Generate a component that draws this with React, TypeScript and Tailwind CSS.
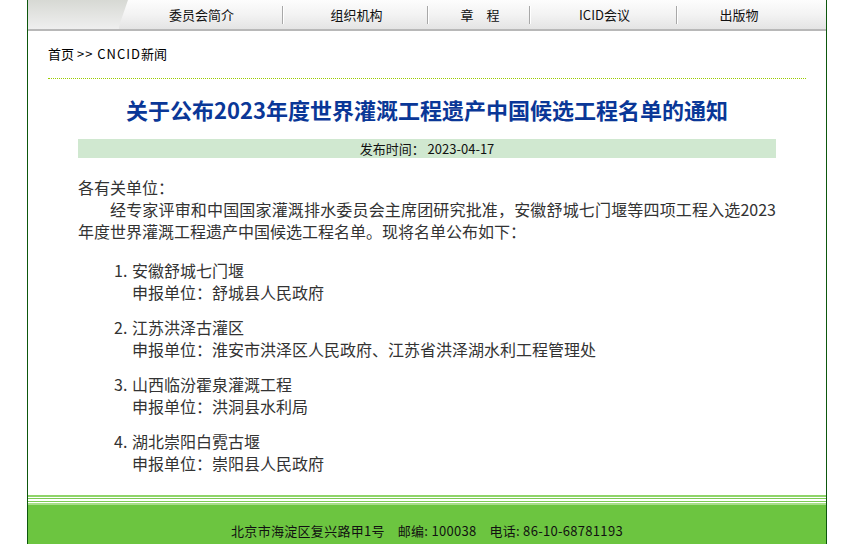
const navItems = [
  { label: "委员会简介", w: "w-[165px]" },
  { label: "组织机构", w: "w-[145px]" },
  { label: "章　程", w: "w-[102px]" },
  { label: "ICID会议", w: "w-[147px]" },
  { label: "出版物", w: "w-[122px]" },
];

const projects = [
  { name: "安徽舒城七门堰", unit: "舒城县人民政府" },
  { name: "江苏洪泽古灌区", unit: "淮安市洪泽区人民政府、江苏省洪泽湖水利工程管理处" },
  { name: "山西临汾霍泉灌溉工程", unit: "洪洞县水利局" },
  { name: "湖北崇阳白霓古堰", unit: "崇阳县人民政府" },
];

function NavBar() {
  return (
    <div className="flex h-[31px] border-b-2 border-[#b8b8b8] bg-gradient-to-b from-[#fdfdfd] via-[#f3f3f3] to-[#e4e4e4]">
      <div className="relative w-[91px] bg-gradient-to-b from-[#d7d9d4] to-[#efefef]">
        <div className="absolute right-[-9px] top-0 h-full w-[10px] bg-gradient-to-b from-[#d7d9d4] to-[#efefef] [clip-path:polygon(0_0,100%_0,0_100%)]" />
      </div>
      {navItems.map((item, i) => (
        <div key={item.label} className={`relative flex items-center justify-center ${item.w}`}>
          <span className="text-[13px] text-[#111]">{item.label}</span>
          {i < navItems.length - 1 && (
            <span className="absolute right-0 top-[6px] h-[18px] w-[2px] border-l border-[#a8a8a8] bg-white" />
          )}
        </div>
      ))}
    </div>
  );
}

export default function App() {
  return (
    <div
      className="min-h-[544px] bg-white"
      style={{ fontFamily: '"Noto Sans CJK SC", "Noto Sans", sans-serif' }}
    >
      <div className="ml-[27px] w-[800px] border-x border-[#0d570d] bg-white">
        <NavBar />

        <div className="px-[20px]">
          <div className="pt-[13px] text-[13px] leading-[20px] text-black">
            首页 <span className="tracking-[1px]">&gt;&gt; CNCID</span>新闻
          </div>
          <div className="mt-[14px] border-t border-dotted border-[#9acc00]" />
        </div>

        <h1 className="mt-[15px] text-center text-[22px] font-bold leading-[30px] text-[#0a3797]">
          关于公布2023年度世界灌溉工程遗产中国候选工程名单的通知
        </h1>

        <div className="px-[50px]">
          <div className="mt-[15px] bg-[#d0e8d0] text-center text-[13px] leading-[19px] text-[#111]">
            发布时间：&nbsp;2023-04-17
          </div>

          <div className="mt-[18px] text-[16px] leading-[22px] text-[#333]">
            <p>各有关单位：</p>
            <p className="indent-[32px] text-justify">
              经专家评审和中国国家灌溉排水委员会主席团研究批准，安徽舒城七门堰等四项工程入选2023年度世界灌溉工程遗产中国候选工程名单。现将名单公布如下：
            </p>

            <div className="mt-[17px] flex flex-col gap-[13px] pl-[36px]">
              {projects.map((p, i) => (
                <div key={p.name} className="flex">
                  <span className="w-[18px] shrink-0">{i + 1}.</span>
                  <div>
                    <div>{p.name}</div>
                    <div>申报单位：{p.unit}</div>
                  </div>
                </div>
              ))}
            </div>
          </div>
        </div>

        <div className="mt-[21px]">
          <div className="h-[2px] bg-[#8fd46a]" />
          <div className="h-[1px] bg-white" />
          <div className="h-[1px] bg-[#7ccb55]" />
          <div className="h-[2px] bg-white" />
          <div className="h-[1px] bg-[#7ccb55]" />
          <div className="h-[1px] bg-white" />
          <div className="h-[2px] bg-[#a6de88]" />
          <div className="h-[60px] bg-[#6cc540] pt-[17px] text-center text-[13px] leading-[18px] tracking-[0.3px] text-[#111]">
            北京市海淀区复兴路甲1号&nbsp;&nbsp;&nbsp;&nbsp;邮编: 100038&nbsp;&nbsp;&nbsp;&nbsp;电话: 86-10-68781193
          </div>
        </div>
      </div>
    </div>
  );
}
